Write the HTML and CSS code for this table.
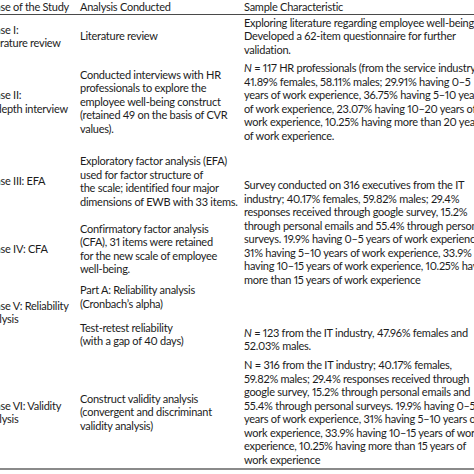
FILE: index.html
```html
<!DOCTYPE html>
<html lang="en">
<head>
<meta charset="utf-8">
<title>Phases of the study</title>
<link rel="stylesheet" href="styles.css">
</head>
<body>
<div class="frame">
  <table class="study">
    <colgroup>
      <col class="c-phase">
      <col class="c-analysis">
      <col class="c-sample">
    </colgroup>
    <thead>
      <tr>
        <th>Phase of the Study</th>
        <th>Analysis Conducted</th>
        <th>Sample Characteristic</th>
      </tr>
    </thead>
    <tbody>
      <tr class="r1">
        <td>Phase I:<br>Literature review</td>
        <td>Literature review</td>
        <td>Exploring literature regarding employee well-being.<br>Developed a 62-item questionnaire for further<br>validation.</td>
      </tr>
      <tr class="r2">
        <td>Phase II:<br>In-depth interview</td>
        <td>Conducted interviews with HR<br>professionals to explore the<br>employee well-being construct<br>(retained 49 on the basis of CVR<br>values).</td>
        <td><i>N</i> = 117 HR professionals (from the service industry)<br>41.89% females, 58.11% males; 29.91% having 0–5<br>years of work experience, 36.75% having 5–10 years<br>of work experience, 23.07% having 10–20 years of<br>work experience, 10.25% having more than 20 years<br>of work experience.</td>
      </tr>
      <tr class="r3">
        <td>Phase III: EFA</td>
        <td>Exploratory factor analysis (EFA)<br>used for factor structure of<br>the scale; identified four major<br>dimensions of EWB with 33 items.</td>
        <td rowspan="3" class="survey">Survey conducted on 316 executives from the IT<br>industry; 40.17% females, 59.82% males; 29.4%<br>responses received through google survey, 15.2%<br>through personal emails and 55.4% through personal<br>surveys. 19.9% having 0–5 years of work experience,<br>31% having 5–10 years of work experience, 33.9%<br>having 10–15 years of work experience, 10.25% having<br>more than 15 years of work experience</td>
      </tr>
      <tr class="r4">
        <td>Phase IV: CFA</td>
        <td>Confirmatory factor analysis<br>(CFA), 31 items were retained<br>for the new scale of employee<br>well-being.</td>
      </tr>
      <tr class="r5">
        <td rowspan="2" class="rel">Phase V: Reliability<br>analysis</td>
        <td>Part A: Reliability analysis<br>(Cronbach’s alpha)</td>
      </tr>
      <tr class="r6">
        <td>Test-retest reliability<br>(with a gap of 40 days)</td>
        <td class="retest"><i>N</i> = 123 from the IT industry, 47.96% females and<br>52.03% males.</td>
      </tr>
      <tr class="r7">
        <td>Phase VI: Validity<br>analysis</td>
        <td>Construct validity analysis<br>(convergent and discriminant<br>validity analysis)</td>
        <td>N = 316 from the IT industry; 40.17% females,<br>59.82% males; 29.4% responses received through<br>google survey, 15.2% through personal emails and<br>55.4% through personal surveys. 19.9% having 0–5<br>years of work experience, 31% having 5–10 years of<br>work experience, 33.9% having 10–15 years of work<br>experience, 10.25% having more than 15 years of<br>work experience</td>
      </tr>
    </tbody>
  </table>
  <p class="source"><b>Source:</b> The authors.</p>
</div>
</body>
</html>
```
FILE: styles.css
```css
html, body {
  margin: 0;
  padding: 0;
  background: #ffffff;
}

.frame {
  width: 474px;
  height: 474px;
  overflow: hidden;
  font-family: Lato, "Open Sans", sans-serif;
  font-size: 11px;
  line-height: 13.5px;
  letter-spacing: -0.25px;
  font-variant-numeric: proportional-nums;
  color: #1c1c1c;
}

.study {
  margin-left: -17px;
  border-collapse: collapse;
  table-layout: fixed;
  width: 600px;
}

.c-phase { width: 97px; }
.c-analysis { width: 164px; }
.c-sample { width: 339px; }

.study th,
.study td {
  padding: 0;
  text-align: left;
  vertical-align: middle;
  white-space: nowrap;
  font-weight: normal;
}

.study th {
  height: 13.5px;
  border-bottom: 1px solid #4a4a4a;
}

.r1 td { height: 43px; }
.r2 td { height: 88px; }
.r3 td { height: 71px; }
.r4 td { height: 64px; }
.r5 td { height: 32px; }
.r6 td { height: 33.5px; }
.r7 td { height: 112px; }

.study td.survey { padding-top: 6px; }
.study td.rel { padding-bottom: 12px; }
.study td.retest { padding-top: 10px; }

.study tbody tr:last-child td {
  border-bottom: 2px solid #8a8a8a;
}

.source {
  margin: 3px 0 0 -17px;
  font-size: 10px;
  line-height: 12px;
}

.source b {
  font-weight: bold;
}
```
